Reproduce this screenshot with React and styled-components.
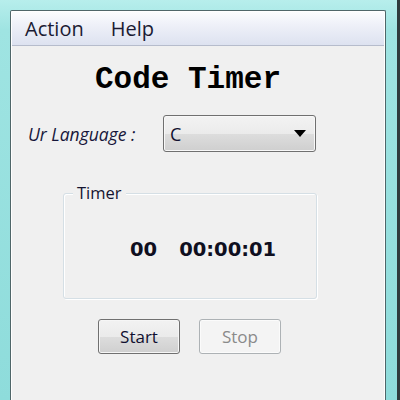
import React from "react";
import styled, { createGlobalStyle } from "styled-components";

const Global = createGlobalStyle`
  html, body { margin: 0; padding: 0; }
  body {
    width: 400px;
    height: 400px;
    overflow: hidden;
    font-family: "Open Sans", "Noto Sans", sans-serif;
  }
`;

const Frame = styled.div`
  width: 400px;
  height: 400px;
  box-sizing: border-box;
  padding: 10px 11px 0 10px;
  background: linear-gradient(180deg, #b7eeec 0px, #9fe4e2 30px, #8edcdb 100%);
  border-right: 3px solid #2f3b3d;
  overflow: hidden;
`;

const Window = styled.div`
  height: 420px;
  border: 1px solid #4f6669;
  border-bottom: none;
  border-radius: 2px 2px 0 0;
  box-shadow: inset 1px 1px 0 #ffffff, inset -1px 0 0 #ffffff;
  background: #f0f0f0;
  padding: 1px 1px 0 1px;
  display: flex;
  flex-direction: column;
`;

const MenuBar = styled.div`
  height: 33px;
  display: flex;
  align-items: center;
  gap: 27px;
  padding-left: 13px;
  background: linear-gradient(180deg, #fbfcfe 0%, #eef0f8 40%, #dde2f0 100%);
  border-bottom: 1px solid #b6bccc;
`;

const MenuItem = styled.span`
  font-family: "Open Sans", "Noto Sans", sans-serif;
  font-size: 20px;
  color: #1b1b33;
  line-height: 1;
`;

const Content = styled.div`
  display: flex;
  flex-direction: column;
  align-items: flex-start;
`;

const Title = styled.h1`
  margin: 16px 0 0 83px;
  font-family: "Liberation Mono", "Courier New", monospace;
  font-weight: bold;
  font-size: 31px;
  line-height: 36px;
  color: #000;
`;

const LangRow = styled.div`
  margin-top: 17px;
  display: flex;
  align-items: center;
  gap: 19px;
  padding-left: 16px;
`;

const Label = styled.span`
  font-family: "Open Sans", "Noto Sans", sans-serif;
  font-style: italic;
  font-size: 17.5px;
  color: #16163a;
  width: 116px;
  white-space: nowrap;
`;

const Select = styled.div`
  box-sizing: border-box;
  width: 153px;
  height: 37px;
  border: 1px solid #707070;
  border-radius: 3px;
  box-shadow: inset 0 0 0 1px #f8f8f8;
  background: linear-gradient(180deg, #f3f3f3 0%, #ebebeb 50%, #dddddd 51%, #cfcfcf 100%);
  display: flex;
  align-items: center;
  justify-content: space-between;
  padding: 0 9px 0 6px;
`;

const SelectText = styled.span`
  font-family: "Open Sans", "Noto Sans", sans-serif;
  font-size: 18px;
  color: #101030;
`;

const Group = styled.div`
  position: relative;
  box-sizing: border-box;
  margin: 41px 0 0 51px;
  width: 254px;
  height: 106px;
  border: 1px solid #d5dfe5;
  border-radius: 3px;
  box-shadow: inset 1px 1px 0 #ffffff, 1px 1px 0 #ffffff;
  display: flex;
  align-items: center;
  padding: 6px 0 0 66px;
  gap: 22px;
`;

const Legend = styled.span`
  position: absolute;
  top: -12px;
  left: 9px;
  padding: 0 4px;
  background: #f0f0f0;
  font-family: "Open Sans", "Noto Sans", sans-serif;
  font-size: 16.5px;
  line-height: 22px;
  color: #141430;
`;

const Digits = styled.span`
  font-family: "DejaVu Sans", Verdana, sans-serif;
  font-weight: bold;
  font-size: 19.5px;
  color: #0f0f1f;
`;

const Buttons = styled.div`
  margin: 20px 0 0 86px;
  display: flex;
  gap: 19px;
`;

const Button = styled.button`
  box-sizing: border-box;
  width: 82px;
  height: 35px;
  border-radius: 3px;
  font-family: "Open Sans", "Noto Sans", sans-serif;
  font-size: 17px;
  padding: 0;
  border: 1px solid ${(p) => (p.disabled ? "#adb2b5" : "#707070")};
  color: ${(p) => (p.disabled ? "#8a8a8a" : "#101030")};
  background: ${(p) =>
    p.disabled
      ? "#f4f4f4"
      : "linear-gradient(180deg, #f2f2f2 0%, #ebebeb 50%, #dddddd 51%, #cfcfcf 100%)"};
  box-shadow: inset 0 0 0 1px ${(p) => (p.disabled ? "#fbfbfb" : "#f6f6f6")};
`;

export default function App() {
  return (
    <>
      <Global />
      <Frame>
        <Window>
          <MenuBar>
            <MenuItem>Action</MenuItem>
            <MenuItem>Help</MenuItem>
          </MenuBar>
          <Content>
            <Title>Code Timer</Title>
            <LangRow>
              <Label>Ur Language :</Label>
              <Select>
                <SelectText>C</SelectText>
                <svg width="12" height="7" viewBox="0 0 12 7">
                  <path d="M0 0 H12 L6 7 Z" fill="#000" />
                </svg>
              </Select>
            </LangRow>
            <Group>
              <Legend>Timer</Legend>
              <Digits>00</Digits>
              <Digits>00:00:01</Digits>
            </Group>
            <Buttons>
              <Button>Start</Button>
              <Button disabled>Stop</Button>
            </Buttons>
          </Content>
        </Window>
      </Frame>
    </>
  );
}
